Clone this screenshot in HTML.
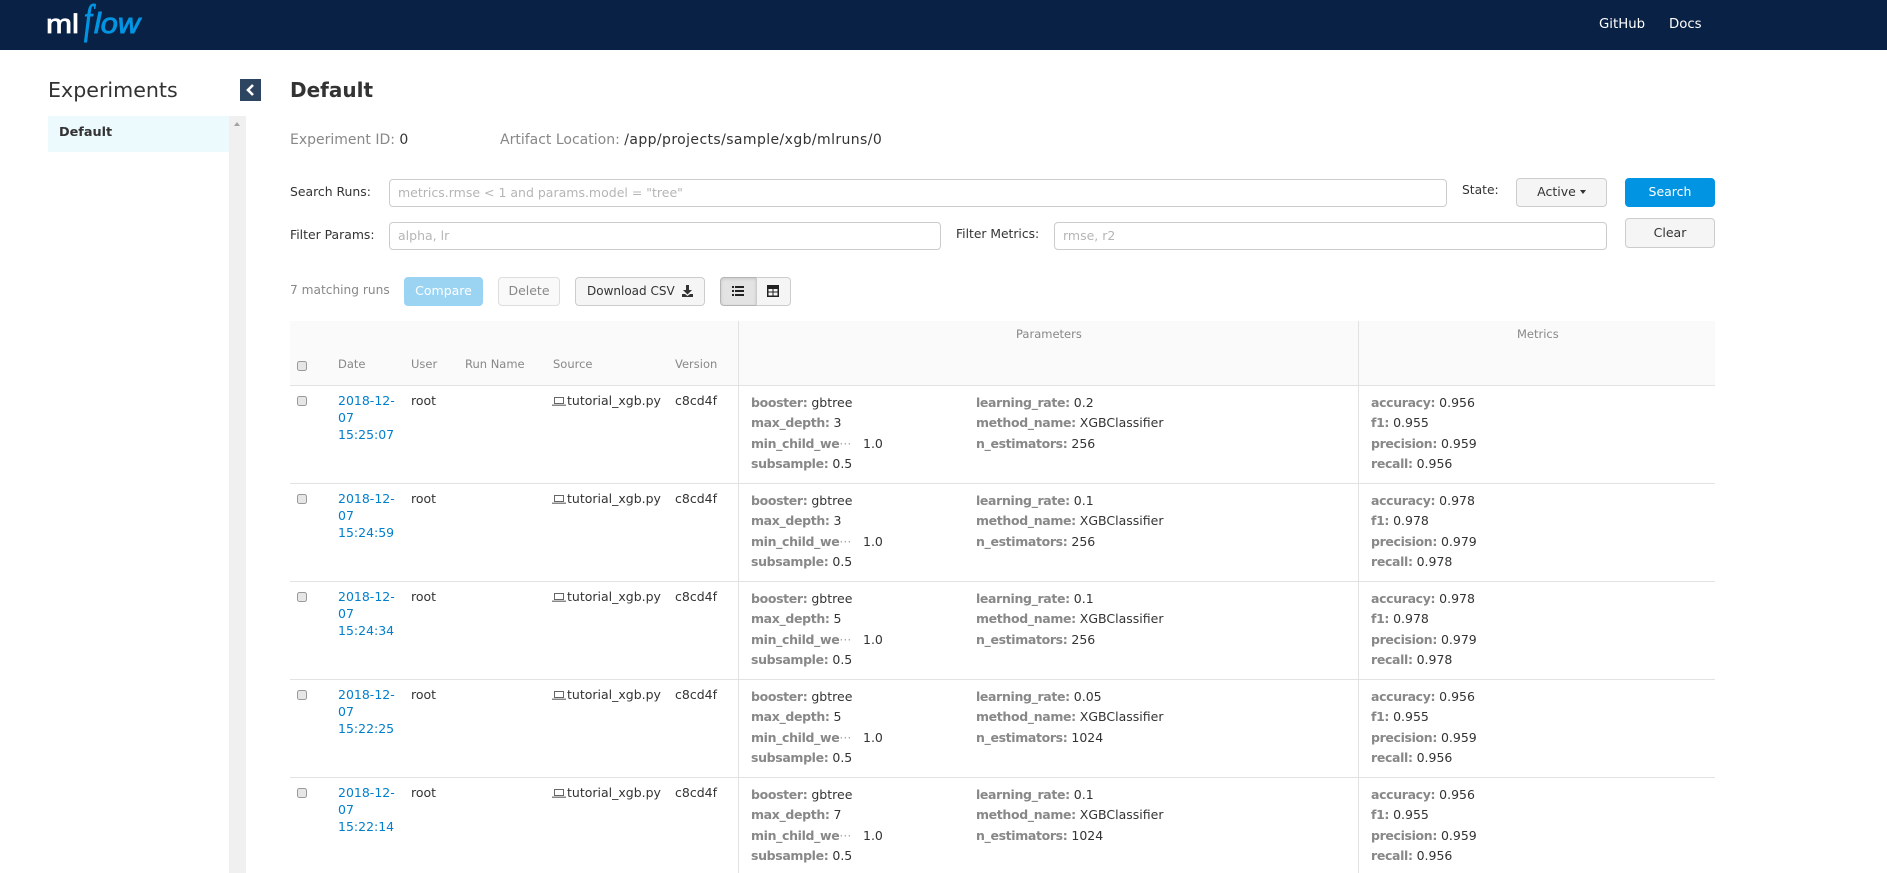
<!DOCTYPE html>
<html><head><meta charset="utf-8"><title>MLflow</title>
<style>
html,body{margin:0;padding:0;width:1887px;height:873px;overflow:hidden;background:#fff}
body{position:relative;font-family:"DejaVu Sans","Liberation Sans",sans-serif;font-size:12.5px;color:#333}
.t{position:absolute;white-space:nowrap;line-height:17px}
.b{position:absolute;box-sizing:border-box;border-radius:4px;text-align:center;line-height:26px;background:#f5f5f5;border:1px solid #ccc;color:#333}
.i{position:absolute;box-sizing:border-box;background:#fff;border:1px solid #ccc;border-radius:4px;height:28px;line-height:26px;padding-left:8px;color:#b5b5b5}
.g{color:#888}
.c{position:absolute;box-sizing:border-box;width:10px;height:10px;border:1px solid #999;background:#e6e6e6;border-radius:2.5px}
.r{position:absolute;left:290px;width:1425px;height:98px;border-bottom:1px solid #e2e2e2;box-sizing:border-box}
.r .t{line-height:17px}
.k{color:#888;font-weight:bold;letter-spacing:-.35px}
.d{color:#017fcc}
.h{color:#888}
.v{position:absolute;width:1px;background:#e2e2e2;top:321px;height:552px}
.s{position:absolute;left:262px;top:10px}
</style></head><body>
<div style="position:absolute;left:0;top:0;width:1887px;height:50px;background:#082144"></div>
<svg style="position:absolute;left:0;top:0" width="160" height="50">
<text x="46" y="33" font-family="Liberation Sans" font-size="27" fill="#fff" stroke="#fff" stroke-width=".8" textLength="33" lengthAdjust="spacingAndGlyphs">ml</text>
<text transform="translate(84,33) scale(.72,1)" font-family="Liberation Serif" font-style="italic" font-size="41" fill="#0194e2" stroke="#0194e2" stroke-width="1.1">f</text>
<text x="94" y="33" font-family="Liberation Sans" font-style="italic" font-size="29" fill="#0194e2" stroke="#0194e2" stroke-width=".9" textLength="46" lengthAdjust="spacingAndGlyphs">low</text>
</svg>
<div class="t" style="left:1599px;top:16px;color:#fff;font-size:13.3px">GitHub</div>
<div class="t" style="left:1669px;top:16px;color:#fff;font-size:13.3px">Docs</div>

<div class="t" style="left:48px;top:78px;font-size:20.6px;line-height:24px;color:#333">Experiments</div>
<div style="position:absolute;left:240px;top:79px;width:21px;height:22px;background:#2e4561"></div>
<svg style="position:absolute;left:240px;top:79px" width="21" height="22"><path d="M13 6 L8 11 L13 16" fill="none" stroke="#fff" stroke-width="2.6"/></svg>
<div class="t" style="left:290px;top:78px;font-size:20px;line-height:24px;font-weight:bold;color:#333">Default</div>

<div style="position:absolute;left:48px;top:116px;width:181px;height:36px;background:#ecf9fd"></div>
<div class="t" style="left:59px;top:124px;font-weight:bold;color:#333;font-size:12.8px">Default</div>
<div style="position:absolute;left:229px;top:116px;width:17px;height:757px;background:#f0f0f0"></div>
<div style="position:absolute;left:234px;top:122px;width:0;height:0;border-left:3.5px solid transparent;border-right:3.5px solid transparent;border-bottom:4px solid #a3a3a3"></div>

<div class="t" style="left:290px;top:132px;font-size:14px"><span class="g">Experiment ID:</span> 0</div>
<div class="t" style="left:500px;top:132px;font-size:14px"><span class="g">Artifact Location:</span> <span style="letter-spacing:.4px">/app/projects/sample/xgb/mlruns/0</span></div>

<div class="t" style="left:290px;top:183px;font-size:12.4px">Search Runs:</div>
<div class="i" style="left:389px;top:179px;width:1058px">metrics.rmse &lt; 1 and params.model = "tree"</div>
<div class="t" style="left:1462px;top:182px;font-size:12.3px">State:</div>
<div class="b" style="left:1516px;top:178px;width:91px;height:29px">Active <span style="display:inline-block;width:0;height:0;border-left:3px solid transparent;border-right:3px solid transparent;border-top:4px solid #333;vertical-align:2px"></span></div>
<div class="b" style="left:1625px;top:178px;width:90px;height:29px;background:#0194e2;border-color:#0194e2;color:#fff">Search</div>

<div class="t" style="left:290px;top:226px;font-size:12.4px">Filter Params:</div>
<div class="i" style="left:389px;top:222px;width:552px">alpha, lr</div>
<div class="t" style="left:956px;top:226px;font-size:12.3px">Filter Metrics:</div>
<div class="i" style="left:1054px;top:222px;width:553px">rmse, r2</div>
<div class="b" style="left:1625px;top:218px;width:90px;height:30px;line-height:27px">Clear</div>

<div class="t g" style="left:290px;top:282px;font-size:12.2px">7 matching runs</div>
<div class="b" style="left:404px;top:277px;width:79px;height:29px;background:#9bd4f3;border-color:#9bd4f3;color:#fff">Compare</div>
<div class="b" style="left:498px;top:277px;width:62px;height:29px;color:#888;background:#f9f9f9;border-color:#ddd">Delete</div>
<div class="b" style="left:575px;top:277px;width:130px;height:29px;text-align:left;padding-left:11px;font-size:12px">Download CSV</div>
<svg style="position:absolute;left:681px;top:284px" width="14" height="14" viewBox="0 0 14 14"><path d="M5 1h3v5h3L6.500 10.500 2 6h3z" fill="#333"/><path d="M1 10h3l2.500 2 2.500-2h3v3H1z" fill="#333"/></svg>
<div class="b" style="left:720px;top:277px;width:37px;height:29px;background:#e3e3e3;border-color:#b5b5b5;border-radius:4px 0 0 4px;box-shadow:inset 0 1px 3px rgba(0,0,0,.12)"></div>
<div class="b" style="left:756px;top:277px;width:35px;height:29px;background:#f5f5f5;border-radius:0 4px 4px 0"></div>
<svg style="position:absolute;left:731px;top:284px" width="14" height="14" viewBox="0 0 14 14"><path d="M1 2h2v2H1zM1 6h2v2H1zM1 10h2v2H1zM4 2h9v2H4zM4 6h9v2H4zM4 10h9v2H4z" fill="#222"/></svg>
<svg style="position:absolute;left:766px;top:284px" width="14" height="14" viewBox="0 0 14 14"><path d="M1 1h12v12H1zM2.500 5v2.500h4V5zM7.500 5v2.500h4V5zM2.500 8.500V11.500h4V8.500zM7.500 8.500V11.500h4V8.500z" fill="#222" fill-rule="evenodd"/></svg>

<div style="position:absolute;left:290px;top:321px;width:1425px;height:64px;background:#fafafa;border-bottom:1px solid #e2e2e2;box-sizing:content-box"></div>
<div class="v" style="left:738px"></div>
<div class="v" style="left:1358px"></div>
<div class="t h" style="left:1016px;top:326px;font-size:11.5px">Parameters</div>
<div class="t h" style="left:1517px;top:326px;font-size:11.5px">Metrics</div>
<div class="c" style="left:297px;top:361px"></div>
<div class="t h" style="left:338px;top:356px;font-size:11.5px">Date</div>
<div class="t h" style="left:411px;top:356px;font-size:11.5px">User</div>
<div class="t h" style="left:465px;top:356px;font-size:11.5px">Run Name</div>
<div class="t h" style="left:553px;top:356px;font-size:11.5px">Source</div>
<div class="t h" style="left:675px;top:356px;font-size:11.5px">Version</div>

<div class="r" style="top:386px">
<div class="c" style="left:7px;top:10px"></div>
<div class="t d" style="left:48px;top:6px">2018-12-<br>07<br>15:25:07</div>
<div class="t" style="left:121px;top:6px">root</div>
<svg class="s" width="14" height="11" viewBox="0 0 14 11"><path d="M2.500 1.500h9v6h-9z" fill="none" stroke="#666"/><path d="M0 8.500h14v1.500H0z" fill="#888"/></svg>
<div class="t" style="left:277px;top:6px">tutorial_xgb.py</div>
<div class="t" style="left:385px;top:6px">c8cd4f</div>
<div class="t" style="left:461px;top:8px"><span class="k">booster:</span> gbtree</div>
<div class="t" style="left:461px;top:28px"><span class="k">max_depth:</span> 3</div>
<div class="t" style="left:461px;top:49px"><span class="k">min_child_we</span><span style="color:#aaa">···</span></div><div class="t" style="left:573px;top:49px">1.0</div>
<div class="t" style="left:461px;top:69px"><span class="k">subsample:</span> 0.5</div>
<div class="t" style="left:686px;top:8px"><span class="k">learning_rate:</span> 0.2</div>
<div class="t" style="left:686px;top:28px"><span class="k">method_name:</span> XGBClassifier</div>
<div class="t" style="left:686px;top:49px"><span class="k">n_estimators:</span> 256</div>
<div class="t" style="left:1081px;top:8px"><span class="k">accuracy:</span> 0.956</div>
<div class="t" style="left:1081px;top:28px"><span class="k">f1:</span> 0.955</div>
<div class="t" style="left:1081px;top:49px"><span class="k">precision:</span> 0.959</div>
<div class="t" style="left:1081px;top:69px"><span class="k">recall:</span> 0.956</div>
</div>

<div class="r" style="top:484px">
<div class="c" style="left:7px;top:10px"></div>
<div class="t d" style="left:48px;top:6px">2018-12-<br>07<br>15:24:59</div>
<div class="t" style="left:121px;top:6px">root</div>
<svg class="s" width="14" height="11" viewBox="0 0 14 11"><path d="M2.500 1.500h9v6h-9z" fill="none" stroke="#666"/><path d="M0 8.500h14v1.500H0z" fill="#888"/></svg>
<div class="t" style="left:277px;top:6px">tutorial_xgb.py</div>
<div class="t" style="left:385px;top:6px">c8cd4f</div>
<div class="t" style="left:461px;top:8px"><span class="k">booster:</span> gbtree</div>
<div class="t" style="left:461px;top:28px"><span class="k">max_depth:</span> 3</div>
<div class="t" style="left:461px;top:49px"><span class="k">min_child_we</span><span style="color:#aaa">···</span></div><div class="t" style="left:573px;top:49px">1.0</div>
<div class="t" style="left:461px;top:69px"><span class="k">subsample:</span> 0.5</div>
<div class="t" style="left:686px;top:8px"><span class="k">learning_rate:</span> 0.1</div>
<div class="t" style="left:686px;top:28px"><span class="k">method_name:</span> XGBClassifier</div>
<div class="t" style="left:686px;top:49px"><span class="k">n_estimators:</span> 256</div>
<div class="t" style="left:1081px;top:8px"><span class="k">accuracy:</span> 0.978</div>
<div class="t" style="left:1081px;top:28px"><span class="k">f1:</span> 0.978</div>
<div class="t" style="left:1081px;top:49px"><span class="k">precision:</span> 0.979</div>
<div class="t" style="left:1081px;top:69px"><span class="k">recall:</span> 0.978</div>
</div>

<div class="r" style="top:582px">
<div class="c" style="left:7px;top:10px"></div>
<div class="t d" style="left:48px;top:6px">2018-12-<br>07<br>15:24:34</div>
<div class="t" style="left:121px;top:6px">root</div>
<svg class="s" width="14" height="11" viewBox="0 0 14 11"><path d="M2.500 1.500h9v6h-9z" fill="none" stroke="#666"/><path d="M0 8.500h14v1.500H0z" fill="#888"/></svg>
<div class="t" style="left:277px;top:6px">tutorial_xgb.py</div>
<div class="t" style="left:385px;top:6px">c8cd4f</div>
<div class="t" style="left:461px;top:8px"><span class="k">booster:</span> gbtree</div>
<div class="t" style="left:461px;top:28px"><span class="k">max_depth:</span> 5</div>
<div class="t" style="left:461px;top:49px"><span class="k">min_child_we</span><span style="color:#aaa">···</span></div><div class="t" style="left:573px;top:49px">1.0</div>
<div class="t" style="left:461px;top:69px"><span class="k">subsample:</span> 0.5</div>
<div class="t" style="left:686px;top:8px"><span class="k">learning_rate:</span> 0.1</div>
<div class="t" style="left:686px;top:28px"><span class="k">method_name:</span> XGBClassifier</div>
<div class="t" style="left:686px;top:49px"><span class="k">n_estimators:</span> 256</div>
<div class="t" style="left:1081px;top:8px"><span class="k">accuracy:</span> 0.978</div>
<div class="t" style="left:1081px;top:28px"><span class="k">f1:</span> 0.978</div>
<div class="t" style="left:1081px;top:49px"><span class="k">precision:</span> 0.979</div>
<div class="t" style="left:1081px;top:69px"><span class="k">recall:</span> 0.978</div>
</div>

<div class="r" style="top:680px">
<div class="c" style="left:7px;top:10px"></div>
<div class="t d" style="left:48px;top:6px">2018-12-<br>07<br>15:22:25</div>
<div class="t" style="left:121px;top:6px">root</div>
<svg class="s" width="14" height="11" viewBox="0 0 14 11"><path d="M2.500 1.500h9v6h-9z" fill="none" stroke="#666"/><path d="M0 8.500h14v1.500H0z" fill="#888"/></svg>
<div class="t" style="left:277px;top:6px">tutorial_xgb.py</div>
<div class="t" style="left:385px;top:6px">c8cd4f</div>
<div class="t" style="left:461px;top:8px"><span class="k">booster:</span> gbtree</div>
<div class="t" style="left:461px;top:28px"><span class="k">max_depth:</span> 5</div>
<div class="t" style="left:461px;top:49px"><span class="k">min_child_we</span><span style="color:#aaa">···</span></div><div class="t" style="left:573px;top:49px">1.0</div>
<div class="t" style="left:461px;top:69px"><span class="k">subsample:</span> 0.5</div>
<div class="t" style="left:686px;top:8px"><span class="k">learning_rate:</span> 0.05</div>
<div class="t" style="left:686px;top:28px"><span class="k">method_name:</span> XGBClassifier</div>
<div class="t" style="left:686px;top:49px"><span class="k">n_estimators:</span> 1024</div>
<div class="t" style="left:1081px;top:8px"><span class="k">accuracy:</span> 0.956</div>
<div class="t" style="left:1081px;top:28px"><span class="k">f1:</span> 0.955</div>
<div class="t" style="left:1081px;top:49px"><span class="k">precision:</span> 0.959</div>
<div class="t" style="left:1081px;top:69px"><span class="k">recall:</span> 0.956</div>
</div>

<div class="r" style="top:778px">
<div class="c" style="left:7px;top:10px"></div>
<div class="t d" style="left:48px;top:6px">2018-12-<br>07<br>15:22:14</div>
<div class="t" style="left:121px;top:6px">root</div>
<svg class="s" width="14" height="11" viewBox="0 0 14 11"><path d="M2.500 1.500h9v6h-9z" fill="none" stroke="#666"/><path d="M0 8.500h14v1.500H0z" fill="#888"/></svg>
<div class="t" style="left:277px;top:6px">tutorial_xgb.py</div>
<div class="t" style="left:385px;top:6px">c8cd4f</div>
<div class="t" style="left:461px;top:8px"><span class="k">booster:</span> gbtree</div>
<div class="t" style="left:461px;top:28px"><span class="k">max_depth:</span> 7</div>
<div class="t" style="left:461px;top:49px"><span class="k">min_child_we</span><span style="color:#aaa">···</span></div><div class="t" style="left:573px;top:49px">1.0</div>
<div class="t" style="left:461px;top:69px"><span class="k">subsample:</span> 0.5</div>
<div class="t" style="left:686px;top:8px"><span class="k">learning_rate:</span> 0.1</div>
<div class="t" style="left:686px;top:28px"><span class="k">method_name:</span> XGBClassifier</div>
<div class="t" style="left:686px;top:49px"><span class="k">n_estimators:</span> 1024</div>
<div class="t" style="left:1081px;top:8px"><span class="k">accuracy:</span> 0.956</div>
<div class="t" style="left:1081px;top:28px"><span class="k">f1:</span> 0.955</div>
<div class="t" style="left:1081px;top:49px"><span class="k">precision:</span> 0.959</div>
<div class="t" style="left:1081px;top:69px"><span class="k">recall:</span> 0.956</div>
</div>
</body></html>
